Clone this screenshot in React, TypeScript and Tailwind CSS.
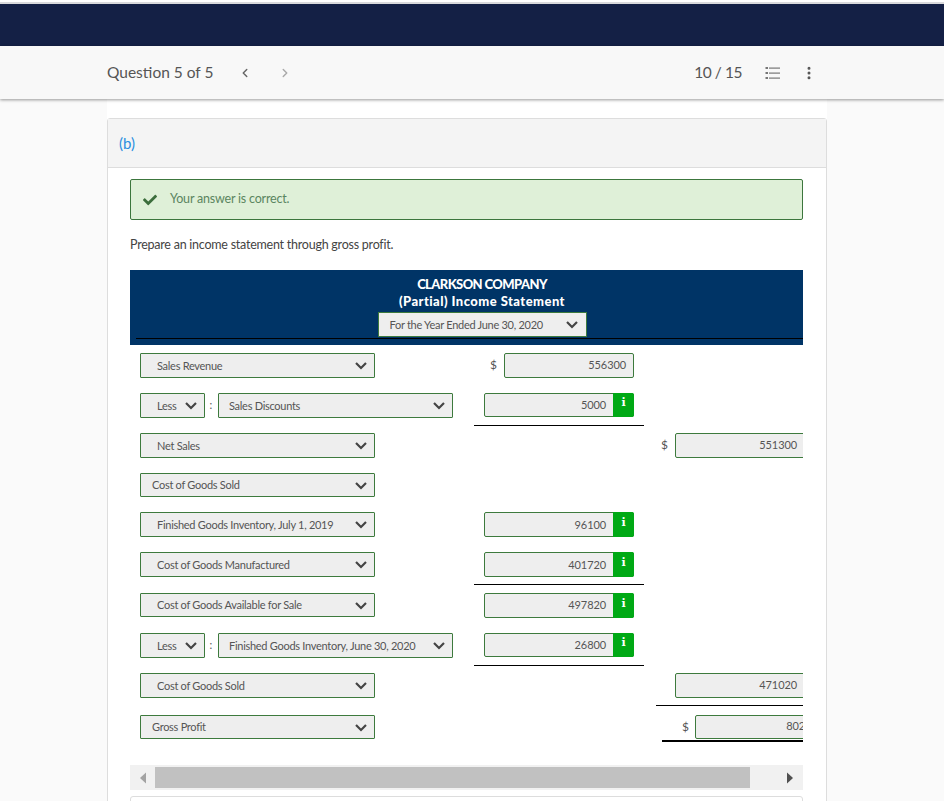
import React from "react";
import { ChevronLeft, ChevronRight, EllipsisVertical } from "lucide-react";
import { FaCheck } from "react-icons/fa";

function Chevron({ className = "" }: { className?: string }) {
  return (
    <svg width="14" height="9" viewBox="0 0 14 9" className={className}>
      <polyline points="2,2 7,7 12,2" fill="none" stroke="#444" strokeWidth="2.2" />
    </svg>
  );
}

function Select({ label, w = "w-[235px]", pl = "pl-[16px]", h = "h-[25px]" }: { label: string; w?: string; pl?: string; h?: string }) {
  return (
    <div className={`${w} ${pl} ${h} shrink-0 flex items-center justify-between pr-[6px] bg-[#eeeeee] border border-[#3d7a3d] text-[11px] text-[#555555] tracking-[-0.28px] whitespace-nowrap rounded-[1px]`}>
      <span className={h === "h-[25px]" ? "pt-[1px]" : ""}>{label}</span>
      <Chevron />
    </div>
  );
}

function Info() {
  return (
    <span className="w-[21px] self-stretch -my-px -mr-px shrink-0 bg-[#00a915] rounded-r-[2px] flex items-center justify-center text-white text-[11px] font-bold pb-[3px] font-['DejaVu_Serif',serif]">
      i
    </span>
  );
}

function Amount({ value, info = false, nudge = false, w = "w-[150px]", h = "h-[25px]" }: { value: string; info?: boolean; nudge?: boolean; w?: string; h?: string }) {
  return (
    <div className={`${w} ${h} shrink-0 flex items-center justify-end bg-[#eeeeee] border border-[#3d7a3d] rounded-[2px] text-[11px] text-[#555555] tracking-[-0.1px]`}>
      <span className={info ? (nudge ? "pr-[7px] pt-[1px]" : "pr-[7px]") : "pr-[7px] pb-[1px]"}>{value}</span>
      {info && <Info />}
    </div>
  );
}

function Dollar({ className = "" }: { className?: string }) {
  return <span className={`shrink-0 pt-[3px] text-[12px] leading-[18px] text-[#555555] ${className}`}>$</span>;
}

function Row({ h, left, mid, right }: { h: string; left: React.ReactNode; mid?: React.ReactNode; right?: React.ReactNode }) {
  return (
    <div className={`flex items-start ${h}`}>
      <div className="w-[344px] shrink-0 pl-[10px] flex items-start">{left}</div>
      <div className="w-[170px] shrink-0">{mid}</div>
      <div className="w-[159px] shrink-0 pl-[12px]">{right}</div>
    </div>
  );
}

function Less({ label }: { label: string }) {
  return (
    <div className="flex items-center">
      <Select label="Less" w="w-[65px]" pl="pl-[16px]" />
      <span className="w-[13px] pr-[1px] text-center text-[11px] text-[#555555]">:</span>
      <Select label={label} w="w-[235px]" pl="pl-[10px]" />
    </div>
  );
}

function MidUnder({ children, h }: { children: React.ReactNode; h: string }) {
  return <div className={`${h} border-b border-black px-[10px]`}>{children}</div>;
}

export default function App() {
  return (
    <div className="h-[801px] overflow-hidden bg-[#fafafa] font-['Lato',sans-serif]">
      <div className="h-[2px] bg-white" />
      <div className="h-[2px] bg-[#d9d9dc]" />
      <div className="h-[42px] bg-[#142045]" />
      <div className="h-[53px] bg-[#f8f8f8] shadow-[0_1px_3px_rgba(0,0,0,0.4)] relative z-10 flex items-center pl-[107px] pr-[127px]">
        <span className="text-[15.5px] text-[#555555]">Question 5 of 5</span>
        <ChevronLeft size={14} strokeWidth={2.5} className="ml-[25px] text-[#666666]" />
        <ChevronRight size={14} strokeWidth={2.5} className="ml-[26px] text-[#aaaaaa]" />
        <span className="ml-auto text-[15.5px] text-[#555555] tracking-[-0.45px]">10 / 15</span>
        <svg width="16" height="14" viewBox="0 0 16 14" className="ml-[23px]">
          <g fill="#777777">
            <rect x="0.5" y="1" width="2.5" height="2" />
            <rect x="0.5" y="6" width="2.5" height="2" />
            <rect x="0.5" y="11" width="2.5" height="2" />
            <rect x="4" y="1.5" width="11" height="1.2" />
            <rect x="4" y="6.5" width="11" height="1.2" />
            <rect x="4" y="11.5" width="11" height="1.2" />
          </g>
        </svg>
        <EllipsisVertical size={16} strokeWidth={2.5} className="ml-[20px] text-[#555555]" />
      </div>

      <div className="mx-[107px] w-[720px] bg-white pt-[19px]">
        <div className="border border-[#dddddd] rounded-t-[3px]">
          <div className="h-[49px] bg-[#f4f4f4] border-b border-[#dddddd] flex items-center pl-[11px] text-[15px] text-[#2a8fe0]">
            (b)
          </div>
          <div className="pl-[22px] pr-[23px] pt-[11px]">
            <div className="h-[41px] bg-[#dff0d8] border border-[#3c763d] rounded-[2px] flex items-center pl-[12px] text-[12.5px] text-[#5a8560] tracking-[-0.2px]">
              <FaCheck size={14} className="text-[#3c6e3c]" />
              <span className="ml-[13px]">Your answer is correct.</span>
            </div>
            <p className="mt-[16px] h-[34px] text-[12.5px] leading-[17px] text-[#444444] tracking-[-0.24px]">Prepare an income statement through gross profit.</p>

            <div className="w-[673px] overflow-hidden">
              <div className="h-[75px] bg-[#003466] flex flex-col">
                <div className="flex-1 flex flex-col items-center pl-[31px] pt-[6px] text-white font-black text-[13px] leading-[17px]">
                  <span className="tracking-[-0.6px]">CLARKSON COMPANY</span>
                  <span className="tracking-[0.45px]">(Partial) Income Statement</span>
                  <div className="mt-[2px] w-[209px] h-[25px] flex items-center justify-between pl-[11px] pr-[7px] bg-[#eeeeee] border border-[#3d7a3d] font-normal text-[11px] text-[#555555] tracking-[-0.28px]">
                    <span>For the Year Ended June 30, 2020</span>
                    <Chevron />
                  </div>
                </div>
                <div className="h-[7px] ml-[6px] border-t border-black" />
              </div>

              <div className="pt-[8px]">
                <Row
                  h="h-[40px]"
                  left={<Select label="Sales Revenue" />}
                  mid={
                    <div className="flex items-start pl-[16px]">
                      <Dollar className="w-[14px]" />
                      <Amount value="556300" w="w-[130px]" />
                    </div>
                  }
                />
                <Row
                  h="h-[40px]"
                  left={<Less label="Sales Discounts" />}
                  mid={<MidUnder h="h-[33px]"><Amount value="5000" info h="h-[24px]" /></MidUnder>}
                />
                <Row
                  h="h-[40px]"
                  left={<Select label="Net Sales" />}
                  right={
                    <div className="flex items-start pl-[5px]">
                      <Dollar className="w-[14px]" />
                      <Amount value="551300" w="w-[130px]" />
                    </div>
                  }
                />
                <Row h="h-[39px]" left={<Select label="Cost of Goods Sold" pl="pl-[11px]" h="h-[24px]" />} />
                <Row
                  h="h-[40px]"
                  left={<Select label="Finished Goods Inventory, July 1, 2019" />}
                  mid={<div className="px-[10px]"><Amount value="96100" info nudge /></div>}
                />
                <Row
                  h="h-[41px]"
                  left={<Select label="Cost of Goods Manufactured" />}
                  mid={<MidUnder h="h-[33px]"><Amount value="401720" info nudge /></MidUnder>}
                />
                <Row
                  h="h-[40px]"
                  left={<Select label="Cost of Goods Available for Sale" h="h-[24px]" />}
                  mid={<div className="px-[10px]"><Amount value="497820" info /></div>}
                />
                <Row
                  h="h-[40px]"
                  left={<Less label="Finished Goods Inventory, June 30, 2020" />}
                  mid={<MidUnder h="h-[33px]"><Amount value="26800" info h="h-[24px]" /></MidUnder>}
                />
                <Row
                  h="h-[42px]"
                  left={<Select label="Cost of Goods Sold" />}
                  right={
                    <div className="h-[33px] border-b border-black w-[147px] pl-[19px]">
                      <Amount value="471020" w="w-[130px]" />
                    </div>
                  }
                />
                <Row
                  h="h-[50px]"
                  left={<Select label="Gross Profit" pl="pl-[11px]" h="h-[24px]" />}
                  right={
                    <div className="ml-[6px] w-[141px] h-[27px] border-b-[2px] border-black flex items-start pl-[20px]">
                      <Dollar className="w-[13px]" />
                      <Amount value="802" w="w-[118px]" h="h-[24px]" />
                    </div>
                  }
                />
              </div>

              <div className="h-[25px] bg-[#f1f1f1] flex items-center">
                <div className="w-[25px] flex justify-center">
                  <svg width="8" height="12" viewBox="0 0 8 12"><polygon points="7,0.5 7,11.5 1,6" fill="#a3a3a3" /></svg>
                </div>
                <div className="w-[595px] h-[21px] bg-[#c1c1c1]" />
                <div className="flex-1 flex justify-end pr-[9px]">
                  <svg width="8" height="12" viewBox="0 0 8 12"><polygon points="1,0.5 1,11.5 7,6" fill="#505050" /></svg>
                </div>
              </div>
            </div>
            <div className="mt-[6px] h-[20px] border border-[#dddddd] rounded-t-[3px]" />
          </div>
        </div>
      </div>
    </div>
  );
}
